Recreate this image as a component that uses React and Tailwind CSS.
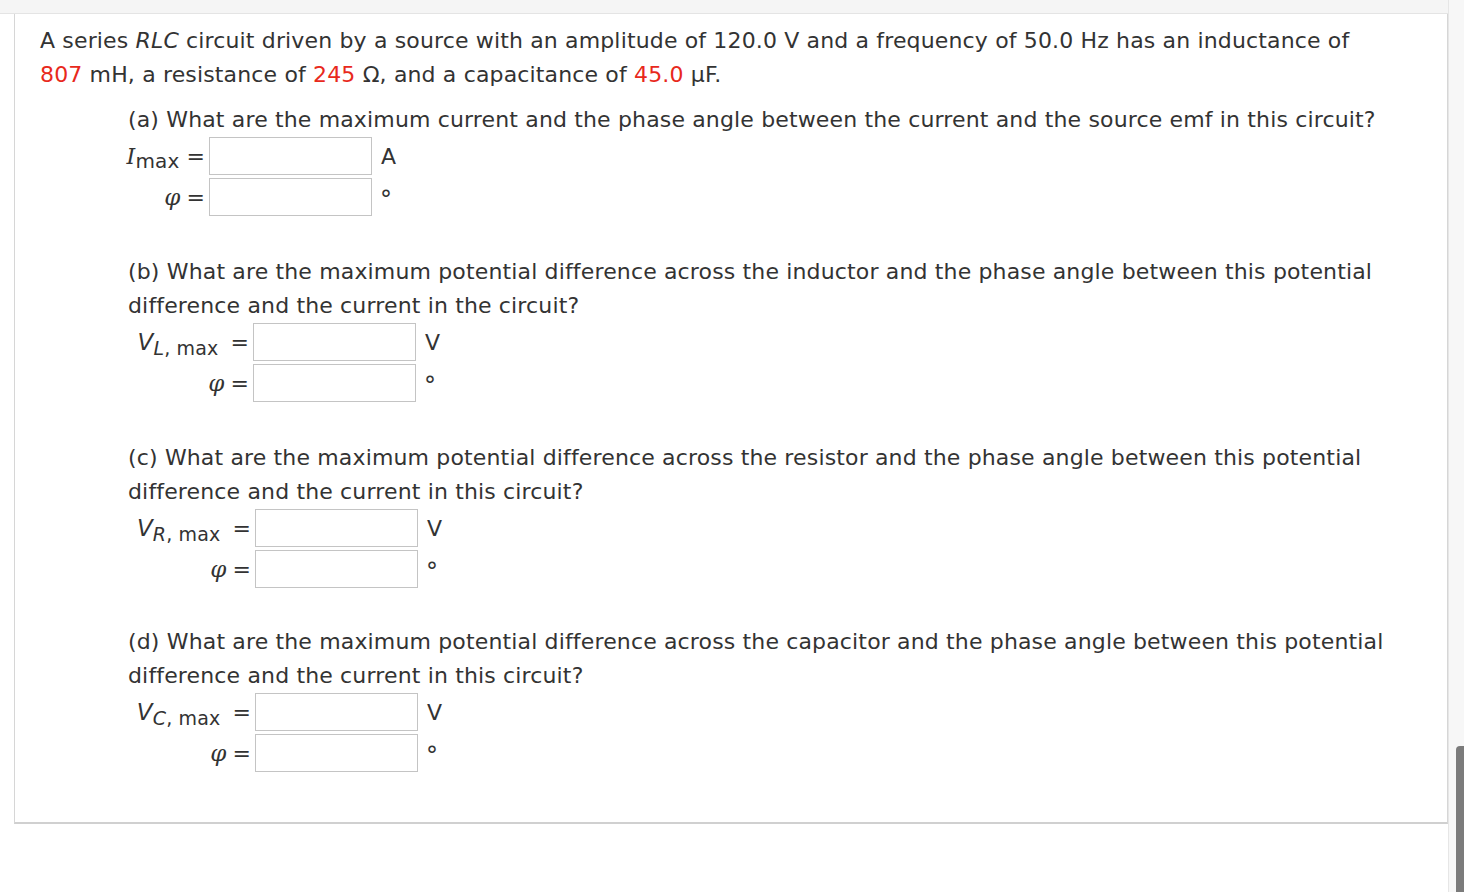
import React from 'react';

const sans = { fontFamily: '"DejaVu Sans", Verdana, sans-serif' };
const serif = { fontFamily: '"DejaVu Serif", "Liberation Serif", serif' };

const Red = ({ children }) => <span className="text-[#e8291c]">{children}</span>;

const Phi = () => (
    <span className="italic text-[23px]" style={serif}>φ</span>
);

const AnswerRow = ({ label, unit, labelWidth }) => (
    <div className="flex items-center h-[38px]">
        <div className={`${labelWidth} flex justify-end items-center pr-[4px] whitespace-nowrap`}>
            {label}
        </div>
        <input
            type="text"
            className="w-[163px] h-[38px] border border-[#c4c4c4] bg-white outline-none"
        />
        <span className="ml-[9px]">{unit}</span>
    </div>
);

const Degree = () => <span className="text-[24px] relative top-[3px] -ml-[1px]">°</span>;

const VLabel = ({ sub }) => (
    <span className="flex items-baseline">
        <span className="italic text-[23px]">V</span>
        <span className="text-[19px] relative top-[5px]">
            <span className="italic">{sub}</span>, max
        </span>
        <span className="ml-[12px]">=</span>
    </span>
);

const Part = ({ letter, question, sub, labelWidth, top }) => (
    <div className={top}>
        <p className="leading-[34px]">({letter}) {question}</p>
        <div className="flex flex-col gap-[3px]">
            <AnswerRow labelWidth={labelWidth} label={<VLabel sub={sub} />} unit="V" />
            <AnswerRow
                labelWidth={labelWidth}
                label={<span className="flex items-center gap-[6px]"><Phi /><span>=</span></span>}
                unit={<Degree />}
            />
        </div>
    </div>
);

export default function App() {
    return (
        <div className="w-[1464px] h-[892px] bg-white flex overflow-hidden text-[#333] text-[22px] tracking-[0.15px]" style={sans}>
            <div className="flex-1 flex flex-col">
                <div className="h-[14px] bg-[#f5f5f5] border-b border-[#e4e4e4]"></div>
                <div className="ml-[14px] border-l border-r border-b-2 border-[#d6d6d6] border-b-[#d0d0d0] pl-[25px] pr-[60px] pt-[10px] h-[810px]">
                    <p className="leading-[34px]">
                        A series <i>RLC</i> circuit driven by a source with an amplitude of 120.0 V and a frequency of 50.0 Hz has an inductance of{' '}
                        <Red>807</Red> mH, a resistance of <Red>245</Red> Ω, and a capacitance of <Red>45.0</Red> μF.
                    </p>
                    <div className="pl-[88px]">
                        <div className="mt-[11px]">
                            <p className="leading-[34px]">(a) What are the maximum current and the phase angle between the current and the source emf in this circuit?</p>
                            <div className="flex flex-col gap-[3px]">
                                <AnswerRow
                                    labelWidth="w-[81px]"
                                    label={
                                        <span className="flex items-baseline">
                                            <span className="italic text-[22px]" style={serif}>I</span>
                                            <span className="text-[20px] relative top-[4px]">max</span>
                                            <span className="ml-[7px]">=</span>
                                        </span>
                                    }
                                    unit="A"
                                />
                                <AnswerRow
                                    labelWidth="w-[81px]"
                                    label={<span className="flex items-center gap-[6px]"><Phi /><span>=</span></span>}
                                    unit={<Degree />}
                                />
                            </div>
                        </div>
                        <Part
                            top="mt-[39px]"
                            letter="b"
                            sub="L"
                            labelWidth="w-[125px]"
                            question="What are the maximum potential difference across the inductor and the phase angle between this potential difference and the current in the circuit?"
                        />
                        <Part
                            top="mt-[39px]"
                            letter="c"
                            sub="R"
                            labelWidth="w-[127px]"
                            question="What are the maximum potential difference across the resistor and the phase angle between this potential difference and the current in this circuit?"
                        />
                        <Part
                            top="mt-[37px]"
                            letter="d"
                            sub="C"
                            labelWidth="w-[127px]"
                            question="What are the maximum potential difference across the capacitor and the phase angle between this potential difference and the current in this circuit?"
                        />
                    </div>
                </div>
            </div>
            <div className="w-[16px] bg-[#f7f7f7] border-l border-[#e6e6e6] flex flex-col justify-end items-end">
                <div className="w-[8px] h-[146px] bg-[#7b7b7b] rounded-tl-[4px]"></div>
            </div>
        </div>
    );
}
